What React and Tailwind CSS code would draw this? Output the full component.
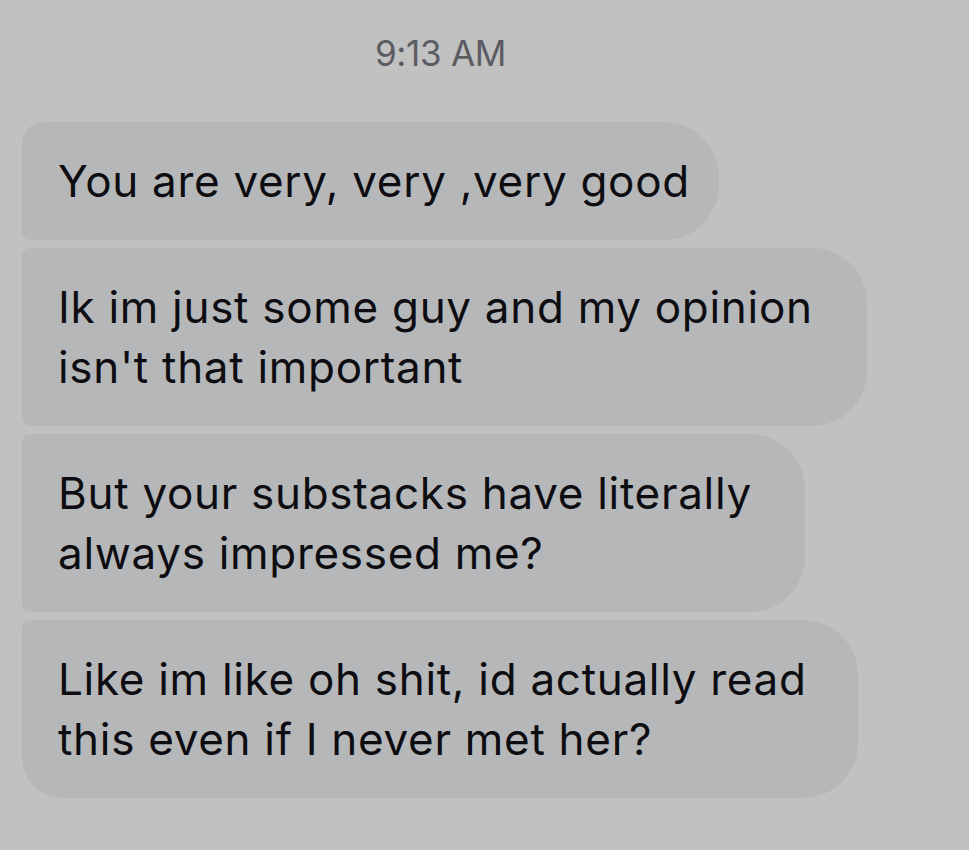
import React from 'react';

const messages = [
  { lines: ['You are very, very ,very good'], shape: 'pr-[29px] rounded-tl-[22px] rounded-bl-[8px]' },
  { lines: ['Ik im just some guy and my opinion', "isn't that important"], shape: 'pr-[54px] rounded-l-[8px]' },
  { lines: ['But your substacks have literally', 'always impressed me?'], shape: 'pr-[53px] rounded-l-[8px]' },
  { lines: ['Like im like oh shit, id actually read', 'this even if I never met her?'], shape: 'pr-[51px] rounded-tl-[8px] rounded-bl-[40px]' },
];

export default function App() {
  return (
    <div
      className="w-[969px] h-[850px] bg-[#c1c1c1] overflow-hidden"
      style={{ fontFamily: 'Inter, "Liberation Sans", sans-serif' }}
    >
      {/* timestamp */}
      <div className="pt-[31px] pr-[88px] text-center text-[35px] leading-[44px] text-[#5b5c61] tracking-[-0.3px]">
        9:13 AM
      </div>

      {/* bubbles */}
      <div className="mt-[47px] pl-[22px] flex flex-col items-start gap-[8px]">
        {messages.map((m, i) => (
          <div
            key={i}
            className={`bg-[#b6b7b9] text-[#0d0d11] text-[44px] leading-[60px] tracking-[0.7px] pl-[36px] py-[29px] whitespace-nowrap rounded-r-[55px] ${m.shape}`}
          >
            {m.lines.map((l, j) => (
              <div key={j}>{l}</div>
            ))}
          </div>
        ))}
      </div>
    </div>
  );
}
